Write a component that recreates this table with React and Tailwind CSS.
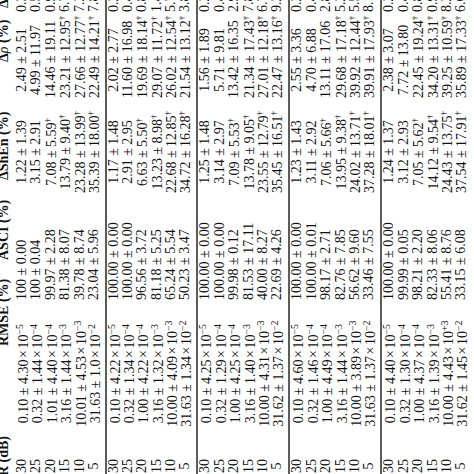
import React from 'react';

const snrs = ['30', '25', '20', '15', '10', '5'];

// each row: [rmse mean, rmse sd, exp, asci, shen, rho, next]
const groups = [
    [
        ['0.10', '4.30', '−5', '100 ± 0.00', ['1.22 ± 1.39', 0], ['2.49 ± 2.51', 0], '0.31 ± 0.22'],
        ['0.32', '1.44', '−4', '100 ± 0.04', ['3.15 ± 2.91', 0], ['4.99 ± 11.97', 0], '0.52 ± 0.41'],
        ['1.01', '4.40', '−4', '99.97 ± 2.28', ['7.08 ± 5.59', 1], ['14.46 ± 19.11', 0], '0.94 ± 0.63'],
        ['3.16', '1.44', '−3', '81.38 ± 8.07', ['13.79 ± 9.40', 1], ['23.21 ± 12.95', 1], '6.71 ± 4.12'],
        ['10.01', '4.53', '−3', '39.78 ± 8.74', ['23.28 ± 13.99', 1], ['27.66 ± 12.77', 1], '7.23 ± 3.85'],
        ['31.63', '1.0', '−2', '23.04 ± 5.96', ['35.39 ± 18.00', 1], ['22.49 ± 14.21', 1], '7.84 ± 4.06'],
    ],
    [
        ['0.10', '4.22', '−5', '100.00 ± 0.00', ['1.17 ± 1.48', 0], ['2.02 ± 2.77', 0], '0.28 ± 0.19'],
        ['0.32', '1.34', '−4', '100.00 ± 0.00', ['2.91 ± 2.95', 0], ['11.60 ± 16.98', 0], '0.47 ± 0.36'],
        ['1.00', '4.22', '−4', '96.56 ± 3.72', ['6.63 ± 5.50', 1], ['19.69 ± 18.14', 1], '0.88 ± 0.57'],
        ['3.16', '1.32', '−3', '81.18 ± 5.25', ['13.23 ± 8.98', 1], ['29.07 ± 11.72', 1], '1.45 ± 0.92'],
        ['10.00', '4.09', '−3', '65.24 ± 5.54', ['22.68 ± 12.85', 1], ['26.02 ± 12.54', 1], '5.76 ± 3.41'],
        ['31.63', '1.34', '−2', '50.23 ± 3.47', ['34.72 ± 16.28', 1], ['21.54 ± 13.12', 1], '3.82 ± 2.77'],
    ],
    [
        ['0.10', '4.25', '−5', '100.00 ± 0.00', ['1.25 ± 1.48', 0], ['1.56 ± 1.89', 0], '0.26 ± 0.18'],
        ['0.32', '1.29', '−4', '100.00 ± 0.00', ['3.14 ± 2.97', 0], ['5.71 ± 9.81', 0], '0.44 ± 0.33'],
        ['1.00', '4.25', '−4', '99.98 ± 0.12', ['7.09 ± 5.53', 1], ['13.42 ± 16.35', 0], '2.95 ± 1.84'],
        ['3.16', '1.40', '−3', '81.53 ± 17.11', ['13.78 ± 9.05', 1], ['21.34 ± 17.43', 1], '7.82 ± 4.19'],
        ['10.00', '4.31', '−3', '40.00 ± 8.27', ['23.55 ± 12.79', 1], ['27.01 ± 12.18', 1], '6.73 ± 3.96'],
        ['31.62', '1.37', '−2', '22.69 ± 4.26', ['35.45 ± 16.51', 1], ['22.47 ± 13.16', 1], '9.25 ± 4.48'],
    ],
    [
        ['0.10', '4.60', '−5', '100.00 ± 0.00', ['1.23 ± 1.43', 0], ['2.55 ± 3.36', 0], '0.27 ± 0.20'],
        ['0.32', '1.46', '−4', '100.00 ± 0.01', ['3.11 ± 2.92', 0], ['4.70 ± 6.88', 0], '0.49 ± 0.35'],
        ['1.00', '4.49', '−4', '98.17 ± 2.71', ['7.06 ± 5.66', 1], ['13.11 ± 17.06', 0], '2.84 ± 1.77'],
        ['3.16', '1.44', '−3', '82.76 ± 7.85', ['13.95 ± 9.38', 1], ['29.68 ± 17.18', 1], '5.26 ± 3.30'],
        ['10.00', '3.89', '−3', '56.62 ± 9.60', ['24.02 ± 13.71', 1], ['39.92 ± 12.44', 1], '5.51 ± 3.08'],
        ['31.63', '1.37', '−2', '33.46 ± 7.55', ['37.28 ± 18.01', 1], ['39.91 ± 17.93', 1], '8.17 ± 4.62'],
    ],
    [
        ['0.10', '4.40', '−5', '100.00 ± 0.00', ['1.24 ± 1.37', 0], ['2.38 ± 3.07', 0], '0.25 ± 0.17'],
        ['0.32', '1.30', '−4', '99.99 ± 0.05', ['3.12 ± 2.93', 0], ['7.72 ± 13.80', 0], '0.46 ± 0.31'],
        ['1.00', '4.37', '−4', '98.21 ± 2.20', ['7.05 ± 5.62', 1], ['22.45 ± 19.24', 1], '0.83 ± 0.52'],
        ['3.16', '1.39', '−3', '82.33 ± 8.06', ['14.12 ± 9.54', 1], ['34.20 ± 13.31', 1], '0.97 ± 0.64'],
        ['10.00', '4.43', '+3', '55.41 ± 8.76', ['24.43 ± 13.75', 1], ['39.25 ± 10.59', 1], '8.21 ± 4.37'],
        ['31.62', '1.45', '−2', '33.15 ± 6.08', ['37.54 ± 17.91', 1], ['35.89 ± 17.33', 1], '6.68 ± 3.92'],
    ],
];

function Dag({ on }) {
    if (!on) return null;
    return <span className="align-[5px] text-[9px] leading-none">†</span>;
}

function Row({ snr, r }) {
    const [m, sd, ex, asci, shen, rho, next] = r;
    return (
        <div className="flex h-[14.4px] items-start whitespace-nowrap">
            <div className="w-[60px] shrink-0 text-center">{snr}</div>
            <div className="w-[125px] shrink-0 text-center">
                {m} ± {sd}
                <span className="px-[1.5px]">×</span>10
                <span className="align-[5px] text-[10px] leading-none">{ex}</span>
            </div>
            <div className="w-[105px] shrink-0 pl-[11px] text-left">{asci}</div>
            <div className="w-[108px] shrink-0 text-center">
                {shen[0]}
                <Dag on={shen[1]} />
            </div>
            <div className="w-[76px] shrink-0 text-center">
                {rho[0]}
                <Dag on={rho[1]} />
            </div>
            <div className="w-[80px] shrink-0 pl-[10px] text-left">{next}</div>
        </div>
    );
}

export default function App() {
    return (
        <div className="relative h-[474px] w-[474px] overflow-hidden bg-white">
            <div className="w-[570px] origin-top-left [transform:translate(-3px,496px)_rotate(-90deg)] font-['Liberation_Serif',serif] text-[14px] leading-[14.4px] text-[#111]">
                {/* header row */}
                <div className="flex h-[18px] items-start whitespace-nowrap font-bold">
                    <div className="w-[150px] shrink-0 pl-[2px]">SNR (dB)</div>
                    <div className="w-[86px] shrink-0">RMSE (%)</div>
                    <div className="w-[80px] shrink-0">ASCI (%)</div>
                    <div className="w-[118px] shrink-0">ΔShEn (%)</div>
                    <div className="w-[54px] shrink-0">
                        Δ<span className="font-normal italic">ρ</span> (%)
                    </div>
                    <div className="shrink-0">ΔEn (%)</div>
                </div>

                {groups.map((g, gi) => (
                    <div
                        key={gi}
                        className={gi === 0 ? 'pb-[3.2px]' : 'border-t-2 border-[#5c5c5c] pb-[3.6px]'}
                    >
                        {g.map((r, ri) => (
                            <Row key={ri} snr={snrs[ri]} r={r} />
                        ))}
                    </div>
                ))}
            </div>
        </div>
    );
}
